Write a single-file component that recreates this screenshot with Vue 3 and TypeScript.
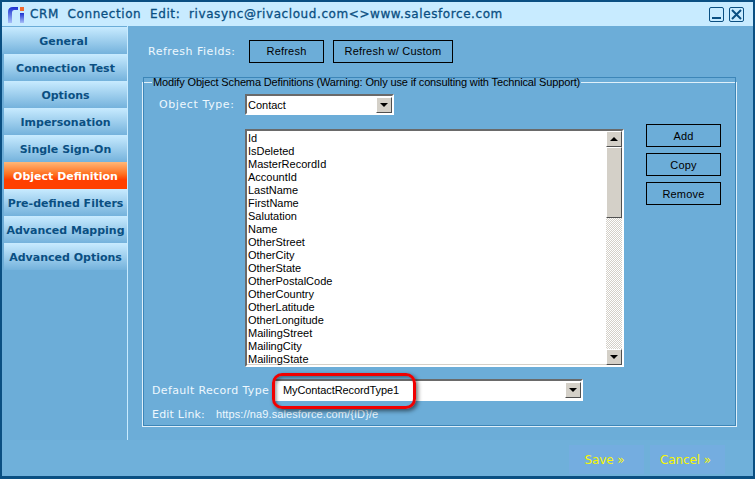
<script setup lang="ts">
const nav: string[] = ['General','Connection Test','Options','Impersonation','Single Sign-On','Object Definition','Pre-defined Filters','Advanced Mapping','Advanced Options']
const active = 'Object Definition'
const fields: string[] = ['Id','IsDeleted','MasterRecordId','AccountId','LastName','FirstName','Salutation','Name','OtherStreet','OtherCity','OtherState','OtherPostalCode','OtherCountry','OtherLatitude','OtherLongitude','MailingStreet','MailingCity','MailingState']
</script>

<template>
  <div class="window">
    <header class="titlebar">
      <svg class="logo" width="16" height="16" viewBox="0 0 16 16">
        <defs>
          <linearGradient id="lg" x1="0" y1="0" x2="0" y2="1">
            <stop offset="0" stop-color="#1a2fd0"/>
            <stop offset="1" stop-color="#a8c0f8"/>
          </linearGradient>
        </defs>
        <path d="M0 16V5Q0 0 5 0H10V3H6Q4 3 4 5.500V16Z" fill="url(#lg)"/>
        <rect x="12" y="0" width="4" height="4" fill="#f06a30"/>
        <rect x="12" y="6" width="4" height="10" fill="url(#lg)"/>
      </svg>
      <span class="title">CRM&nbsp; Connection&nbsp; Edit:&nbsp; rivasync@rivacloud.com&lt;&gt;www.salesforce.com</span>
      <div class="winbtns">
        <button class="winbtn"><svg width="15" height="15" viewBox="0 0 15 15"><rect x="3" y="10" width="9" height="2" fill="#0a4f82"/></svg></button>
        <button class="winbtn"><svg width="15" height="15" viewBox="0 0 15 15"><path d="M3 3L12 12M12 3L3 12" stroke="#0a4f82" stroke-width="2" fill="none"/></svg></button>
      </div>
    </header>
    <div class="main">
      <nav class="sidebar">
        <div v-for="n in nav" :key="n" class="navitem" :class="{ active: n === active, first: n === 'General' }">{{ n }}</div>
      </nav>
      <section class="content">
        <div class="refresh">
          <span class="lbl refresh-lbl">Refresh Fields:</span>
          <button class="btn b1">Refresh</button>
          <button class="btn b2">Refresh w/ Custom</button>
        </div>
        <fieldset class="group">
          <legend>Modify Object Schema Definitions (Warning: Only use if consulting with Technical Support)</legend>
          <div class="typerow">
            <span class="lbl type-lbl">Object Type:</span>
            <div class="select s1">
              <span>Contact</span>
              <span class="sbtn"><i class="down"></i></span>
            </div>
          </div>
          <div class="listrow">
            <div class="listbox">
              <div class="items"><div v-for="f in fields" :key="f">{{ f }}</div></div>
              <div class="vscroll">
                <span class="sbtn"><i class="up"></i></span>
                <span class="thumb"></span>
                <span class="track"></span>
                <span class="sbtn"><i class="down"></i></span>
              </div>
            </div>
            <div class="actions">
              <button class="btn">Add</button>
              <button class="btn">Copy</button>
              <button class="btn">Remove</button>
            </div>
          </div>
          <div class="recordrow">
            <span class="lbl rec-lbl">Default Record Type</span>
            <div class="select s2">
              <span>MyContactRecordType1</span>
              <span class="sbtn"><i class="down"></i></span>
              <span class="callout"></span>
            </div>
          </div>
          <div class="linkrow">
            <span class="lbl link-lbl">Edit Link:</span>
            <span class="lbl link">https://na9.salesforce.com/{ID}/e</span>
          </div>
        </fieldset>
      </section>
    </div>
    <footer class="footer">
      <button class="fbtn">Save »</button>
      <button class="fbtn">Cancel »</button>
    </footer>
  </div>
</template>

<style>
html, body { margin: 0; background: #6cadd8; }
</style>

<style scoped>
.window {
  width: 755px; height: 479px; box-sizing: border-box; overflow: hidden;
  border: 2px solid #0a4f82; border-bottom-width: 3px;
  background: #6cadd8; display: flex; flex-direction: column;
  font-family: "DejaVu Sans", sans-serif; font-size: 11px; color: #000;
}
.titlebar {
  height: 24px; flex: none; display: flex; align-items: center;
  background: #c8ebff; padding: 0 9px 0 6px; box-sizing: border-box;
}
.logo { margin-right: 6px; flex: none; margin-top: 1px; }
.title { font-weight: 400; font-size: 12px; color: #0a4f82; -webkit-text-stroke: 0.3px #0a4f82; white-space: nowrap; letter-spacing: 0.58px; margin-top: -1px; }
.winbtns { margin-left: auto; display: flex; gap: 5px; }
.winbtn { width: 15px; height: 15px; padding: 0; border: 1px solid #0a4f82; border-radius: 2px; background: #c8ebff; display: block; }
.winbtn svg { display: block; margin: -1px; }
.main { height: 414px; flex: none; display: flex; }
.sidebar { width: 125px; flex: none; border-right: 1px solid #c8ebff; padding-top: 1px; height: 413px; box-sizing: content-box; }
.navitem {
  height: 27px; line-height: 30px; margin-left: 2px; text-align: center; white-space: nowrap;
  font-size: 11px; font-weight: 700; color: #0a4f82;
  background: linear-gradient(#c8ebff, #74b2dc);
}
.navitem.first { margin-left: 0; padding-right: 2px; }
.navitem.active { color: #fff; background: linear-gradient(#ffb878 0, #ff7020 45%, #ff4000 65%, #ff4000 100%); }
.content { flex: 1; min-width: 0; padding: 14px 16px 0 14px; box-sizing: border-box; }
.lbl { color: #eef8fe; white-space: nowrap; }
.refresh { display: flex; align-items: center; height: 22px; padding-left: 6px; }
.refresh-lbl { width: 101px; font-size: 11px; letter-spacing: 0.5px; }
.btn {
  box-sizing: border-box; height: 23px; width: 75px; padding: 0;
  background: transparent; border: 1px solid #000; color: #000;
  font: 11px "Liberation Sans", sans-serif; letter-spacing: .2px;
}
.b2 { width: 120px; margin-left: 9px; }
.group {
  margin: 14px 0 0; padding: 0; box-sizing: border-box; height: 351px; min-width: 0;
  border: 1px solid #e0f0fa; outline: 1px solid #3d86b8; outline-offset: -2px;
}
.group legend {
  margin-left: 9px; padding: 0 1px; white-space: nowrap;
  font: 11px/13px "Liberation Sans", sans-serif; letter-spacing: -.14px;
}
.typerow { display: flex; align-items: center; height: 21px; margin-top: 5px; padding-left: 16px; }
.type-lbl { width: 86px; letter-spacing: .6px; }
.select {
  position: relative; box-sizing: border-box; height: 22px; background: #fff;
  border: 2px solid; border-color: #6a6a6a #fff #fff #6a6a6a;
  display: flex; align-items: center; padding-left: 1px;
  font: 11px "Liberation Sans", sans-serif;
}
.select .sbtn { margin-left: auto; margin-right: 0; }
.s1 { width: 149px; height: 21px; }
.s2 { width: 310px; padding-left: 8px; font-size: 11px; letter-spacing: -.1px; }
.sbtn {
  width: 16px; height: 16px; box-sizing: border-box; flex: none; background: #d4d0c8;
  border: 1px solid; border-color: #fff #505050 #505050 #fff;
  display: flex; align-items: center; justify-content: center;
}
.down, .up { width: 0; height: 0; border-left: 4px solid transparent; border-right: 4px solid transparent; display: block; }
.down { border-top: 4px solid #000; }
.up { border-bottom: 4px solid #000; }
.listrow { display: flex; margin-top: 14px; padding-left: 102px; }
.listbox {
  width: 379px; height: 238px; box-sizing: border-box; background: #fff; display: flex;
  border: 2px solid; border-color: #6a6a6a #fff #fff #6a6a6a;
  box-shadow: inset -1px -1px 0 #d4d0c8;
}
.items { flex: 1; overflow: hidden; padding: 1px 0 0 1px; font: 11px/13px "Liberation Sans", sans-serif; }
.vscroll { width: 16px; display: flex; flex-direction: column; }
.thumb { height: 71px; box-sizing: border-box; background: #d4d0c8; border: 1px solid; border-color: #fff #505050 #505050 #fff; flex: none; }
.track { flex: 1; background: repeating-conic-gradient(#d4d0c8 0 25%, #fff 0 50%) 0 0 / 2px 2px; }
.actions { display: flex; flex-direction: column; gap: 6px; margin-left: 22px; margin-top: -5px; }
.recordrow { display: flex; align-items: center; margin-top: 12px; padding-left: 9px; height: 22px; }
.rec-lbl { width: 121px; letter-spacing: .35px; }
.linkrow { display: flex; align-items: center; margin-top: 6px; padding-left: 9px; height: 14px; }
.link-lbl { width: 64px; letter-spacing: .2px; }
.link { font: 11px "Liberation Sans", sans-serif; letter-spacing: .1px; }
.callout {
  position: absolute; left: -3px; top: -8px; width: 144px; height: 36px; box-sizing: border-box;
  border: 3px solid #f00000; border-radius: 10px;
  box-shadow: 2px 2px 4px rgba(0,0,0,.55), inset 2px 2px 3px rgba(0,0,0,.35);
}
.footer { flex: 1; display: flex; justify-content: flex-end; gap: 6px; padding: 5px 28px 3px 0; box-sizing: border-box; background: #6fb0da; }
.fbtn { width: 75px; height: 29px; padding: 0 4px 0 0; border: 0; background: #74ade0; color: #f6f600; font: 12px "DejaVu Sans", sans-serif; letter-spacing: -.1px; }
</style>
